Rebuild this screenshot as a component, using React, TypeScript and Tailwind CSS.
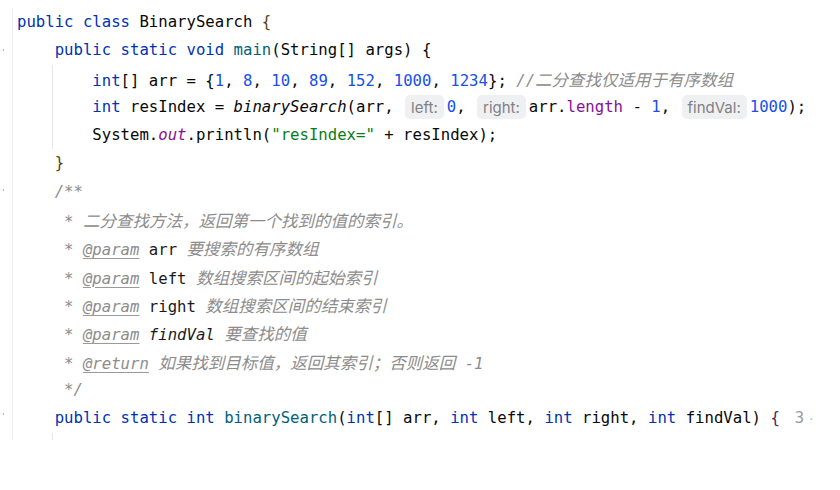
import type { ReactNode } from "react";

const K = ({ children }: { children: ReactNode }) => (
  <span className="text-[#0033b3]">{children}</span>
);
const N = ({ children }: { children: ReactNode }) => (
  <span className="text-[#1750eb]">{children}</span>
);
const Fn = ({ children }: { children: ReactNode }) => (
  <span className="text-[#00627a]">{children}</span>
);
const Br = ({ children }: { children: ReactNode }) => (
  <span className="text-[#5e3f12]">{children}</span>
);
const Cjk = ({ children }: { children: ReactNode }) => (
  <span className="text-[16.5px] font-['Noto_Sans_CJK_SC',sans-serif]">{children}</span>
);

// parameter-name hint shown inline by the IDE
const Hint = ({ label }: { label: string }) => (
  <span className="ml-[2px] mr-[3px] inline-flex h-[24px] items-center rounded-[5px] bg-[#eff0f2] px-[6px] align-middle font-['Inter',sans-serif] text-[15px] leading-none text-[#7f8185] not-italic">
    {label}
  </span>
);

const Tag = ({ children }: { children: ReactNode }) => (
  <span className="underline decoration-[#9a9a9a] underline-offset-[3px]">{children}</span>
);
const PName = ({ children, italic }: { children: ReactNode; italic?: boolean }) => (
  <span className={italic ? "text-[#1a1a1a]" : "not-italic text-[#1a1a1a]"}>{children}</span>
);

function Line({ children }: { children?: ReactNode }) {
  return <div className="h-[28.3px] whitespace-pre leading-[28.3px]">{children}</div>;
}

function Doc({ children }: { children: ReactNode }) {
  return <div className="h-[28.3px] whitespace-pre italic leading-[28.3px] text-[#8c8c8c]">{children}</div>;
}

export default function App() {
  return (
    <div className="relative h-[490px] w-[840px] overflow-hidden bg-white">
      <div className="flex pt-2">
        {/* gutter with fold markers */}
        <div className="relative w-[12px]">
          <span className="absolute left-[3px] top-[41px] h-[2px] w-[1px] bg-[#b5b5b5]" />
          <span className="absolute left-[3px] top-[181px] h-[2px] w-[1px] bg-[#b5b5b5]" />
          <span className="absolute left-[3px] top-[405px] h-[2px] w-[1px] bg-[#b5b5b5]" />
        </div>

        <div className="relative h-[432px] flex-1 overflow-hidden border-l border-[#ececec] pl-[4px] font-['DejaVu_Sans_Mono','Noto_Sans_CJK_SC',monospace] text-[15.65px] text-[#080808]">
          {/* indent guides */}
          <span className="absolute left-[39px] top-[57px] h-[84px] w-px bg-[#e6e6e6]" />
          <span className="absolute left-[39px] top-[425px] h-[8px] w-px bg-[#e6e6e6]" />

          <Line>
            <K>public</K> <K>class</K> BinarySearch <Br>{"{"}</Br>
          </Line>
          <Line>
            {"    "}
            <K>public</K> <K>static</K> <K>void</K> <Fn>main</Fn>(String[] args) {"{"}
          </Line>
          <Line>
            {"        "}
            <K>int</K>[] arr = {"{"}
            <N>1</N>, <N>8</N>, <N>10</N>, <N>89</N>, <N>152</N>, <N>1000</N>, <N>1234</N>
            {"}"}; <span className="italic text-[#8c8c8c]">//<Cjk>二分查找仅适用于有序数组</Cjk></span>
          </Line>
          <Line>
            {"        "}
            <K>int</K> resIndex = <span className="italic">binarySearch</span>(arr, <Hint label="left:" />
            <N>0</N>, <Hint label="right:" />
            arr.<span className="text-[#871094]">length</span> - <N>1</N>, <Hint label="findVal:" />
            <N>1000</N>);
          </Line>
          <Line>
            {"        "}System.<span className="italic text-[#871094]">out</span>.println(
            <span className="text-[#067d17]">"resIndex="</span> + resIndex);
          </Line>
          <Line>
            {"    "}
            <Br>{"}"}</Br>
          </Line>
          <Doc>{"    /**"}</Doc>
          <Doc>
            {"     * "}
            <Cjk>二分查找方法，返回第一个找到的值的索引。</Cjk>
          </Doc>
          <Doc>
            {"     * "}
            <Tag>@param</Tag> <PName>arr</PName> <Cjk>要搜索的有序数组</Cjk>
          </Doc>
          <Doc>
            {"     * "}
            <Tag>@param</Tag> <PName>left</PName> <Cjk>数组搜索区间的起始索引</Cjk>
          </Doc>
          <Doc>
            {"     * "}
            <Tag>@param</Tag> <PName>right</PName> <Cjk>数组搜索区间的结束索引</Cjk>
          </Doc>
          <Doc>
            {"     * "}
            <Tag>@param</Tag> <PName italic>findVal</PName> <Cjk>要查找的值</Cjk>
          </Doc>
          <Doc>
            {"     * "}
            <Tag>@return</Tag> <Cjk>如果找到目标值，返回其索引；否则返回</Cjk> -1
          </Doc>
          <Doc>{"     */"}</Doc>
          <Line>
            {"    "}
            <K>public</K> <K>static</K> <K>int</K> <Fn>binarySearch</Fn>(<K>int</K>[] arr, <K>int</K> left,{" "}
            <K>int</K> right, <K>int</K> findVal) <span className="text-[#4a2a52]">{"{"}</span>
            <span className="ml-[15px] text-[#9a9a9a]">3</span>
            <span className="ml-[4px] text-[10px] text-[#b0b0b0]">·</span>
          </Line>
        </div>
      </div>
    </div>
  );
}
